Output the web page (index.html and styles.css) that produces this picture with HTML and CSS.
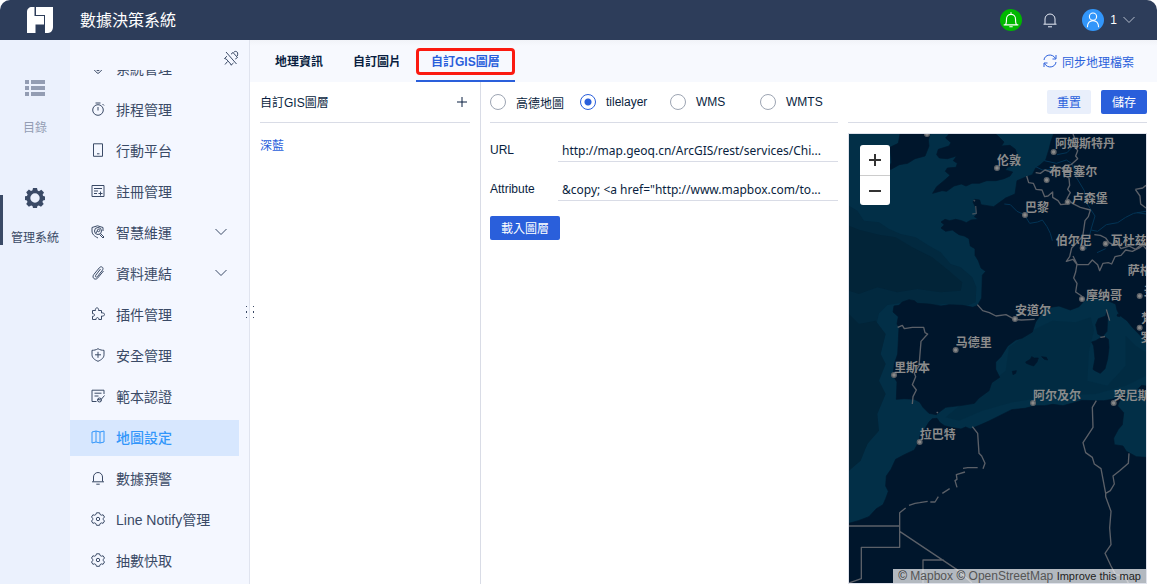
FILE: index.html
```html
<!DOCTYPE html>
<html lang="zh-Hant">
<head>
    <meta charset="UTF-8">
    <meta name="viewport" content="width=device-width, initial-scale=1.0">
    <title>數據決策系統</title>
    <link rel="stylesheet" href="styles.css">
</head>
<body>
    <header class="topbar">
        <svg class="logo" viewBox="0 0 28 28" width="28" height="28" fill="#fff">
            <path d="M1 27V6C1 3 3 1 6 1h2.500v9H18v8.500H9.500V27z"/>
            <path d="M10 1h17v20c0 3-2 6-5 6h-3V9h-9z"/>
        </svg>
        <h1 class="app-name">數據決策系統</h1>
        <button class="top-button alert-button" aria-label="通知">
            <svg class="icon" viewBox="0 0 16 16" width="18" height="18"><path d="M3.200 12c.8-1 .8-2 .8-5a4 4 0 0 1 8 0c0 3 0 4 .8 5M1.500 12.300h13M6.500 14h3M8 3V1"/></svg>
        </button>
        <button class="top-button bell-button" aria-label="訊息">
            <svg class="icon" viewBox="0 0 16 16" width="16" height="16"><path d="M3 12V7a5 5 0 0 1 10 0v5M1.500 12.200h13M6 14.800h4"/></svg>
        </button>
        <button class="user-button">
            <span class="avatar"><svg class="icon" viewBox="0 0 16 16" width="18" height="18"><circle cx="8" cy="5" r="3.200"/><path d="M3 14.500c0-8 10-8 10 0"/></svg></span>
            <span>1</span>
            <svg class="icon chevron" viewBox="0 0 12 8" width="12" height="8"><path d="M.5 1 6 6.500 11.500 1"/></svg>
        </button>
    </header>

    <div class="layout">
        <nav class="rail">
            <a href="#" class="rail-item">
                <svg viewBox="0 0 20 20" width="20" height="20" fill="#939db3"><path d="M0 2h4v4H0zM6 2h14v4H6zM0 8h4v4H0zM6 8h14v4H6zM0 14h4v4H0zM6 14h14v4H6z"/></svg>
                <span>目錄</span>
            </a>
            <a href="#" class="rail-item current">
                <svg viewBox="0 0 20 20" width="20" height="20"><path fill="#3a4a66" fill-rule="evenodd" d="M8 0h4l.6 2.600 1.400.6 2.300-1.400 2.700 2.700-1.400 2.200.6 1.400 1.800.4v3.400l-2 .6-.6 1.400 1.300 2.200-2.700 2.700-2.200-1.400-1.400.6L12 20H8l-.5-2-1.400-.6-2.200 1.400-2.700-2.700L2.500 14l-.6-1.400L0 12V8.300l2-.4.6-1.500-1.400-2.200L3.900 1.500 6 2.900l1.500-.6zM10 5.300a4.700 4.700 0 1 0 0 9.400 4.700 4.700 0 0 0 0-9.400z"/></svg>
                <span>管理系統</span>
            </a>
        </nav>

        <aside class="sidebar">
            <button class="pin-button" aria-label="釘選">
                <svg class="icon" viewBox="0 0 16 16" width="16" height="16"><path d="M3 2l10.500 12M8 4.200l2-1.700 4.500 5L12.300 9M4 6.200 1.500 8.500 3.200 9l4.500 5 .3 1.200 2.500-2.200M4.500 11.500 2 14.500M10.500 2.500C12 .5 16 1 14.300 6"/></svg>
            </button>
            <ul class="menu">
                <li><a href="#"><svg class="icon" viewBox="0 0 14 14" width="14" height="14"><path d="M1 8.500h2l1.500 2 2.500 2 2.500-2 1.500-2h2M4.500 8l2.500 2 2.500-2"/></svg>系統管理</a></li>
                <li><a href="#"><svg class="icon" viewBox="0 0 14 14" width="14" height="14"><circle cx="7" cy="8" r="5.300"/><path d="M4.500 1h5M7 5v3.500M11.500 2l1.500 1.500"/></svg>排程管理</a></li>
                <li><a href="#"><svg class="icon" viewBox="0 0 14 14" width="14" height="14"><path d="M2.500.8h9v12.500h-9zM6 10.800h2.500"/></svg>行動平台</a></li>
                <li><a href="#"><svg class="icon" viewBox="0 0 14 14" width="14" height="14"><path d="M1 1.500h12v11H1zM3 4.500h8M3 7h4M3 9.500h3M7.500 9.500h4M9.500 7.500v4"/></svg>註冊管理</a></li>
                <li><a href="#"><svg class="icon" viewBox="0 0 14 14" width="14" height="14"><path d="M7 13C3 11 1 9 1 6V2.500L6.500.8 12 2.500V6M9.500 8.500 13 12l-1 1-3.500-3.500M5 8l1.500-2.500"/><circle cx="7" cy="6" r="3.500"/><circle cx="7.500" cy="5.500" r="1.200"/></svg>智慧維運<svg class="icon arrow" viewBox="0 0 12 8" width="12" height="8"><path d="M.5 1 6 6.500 11.500 1"/></svg></a></li>
                <li><a href="#"><svg class="icon" viewBox="0 0 14 14" width="14" height="14"><path d="M9.500 3 4.700 9.300c-1 1.500.8 2.500 1.700 1.300l5.100-6.500c1.700-2.500-1.300-4.600-3.200-2.300L2.800 8.500c-2.500 3.400 1.500 6.400 4 3.400L12.500 5"/></svg>資料連結<svg class="icon arrow" viewBox="0 0 12 8" width="12" height="8"><path d="M.5 1 6 6.500 11.500 1"/></svg></a></li>
                <li><a href="#"><svg class="icon" viewBox="0 0 14 14" width="14" height="14"><path d="M1.500 3.500h3c-1-3.500 4-3.500 3 0h3V6c4-1 4 4 0 3v3.500H7.800c.3-2.600-3-2.600-2.700 0H1.500V9.300c2.800.2 2.800-2.800 0-2.600z"/></svg>插件管理</a></li>
                <li><a href="#"><svg class="icon" viewBox="0 0 14 14" width="14" height="14"><path d="M7 .7c2 1.300 4 1.600 6 1.600v4.500c0 3-2.500 5-6 6.500-3.500-1.500-6-3.500-6-6.500V2.300c2 0 4-.3 6-1.600zM7 3.800v6M4 6.800h6"/></svg>安全管理</a></li>
                <li><a href="#"><svg class="icon" viewBox="0 0 14 14" width="14" height="14"><path d="M13 5V1.200H1v11.300h4.500M3.500 4.200h7M3.500 7h4M10.500 10l3-3.500M7 10.500l3 .5"/><circle cx="8.500" cy="11" r="2"/></svg>範本認證</a></li>
                <li><a href="#" class="active"><svg class="icon" viewBox="0 0 14 14" width="14" height="14"><path d="M1 2l4-1 4 1 4-1v11l-4 1-4-1-4 1zM5 1v11M9 2v11"/></svg>地圖設定</a></li>
                <li><a href="#"><svg class="icon" viewBox="0 0 14 14" width="14" height="14"><path d="M2.500 10.500V6a4.500 4.500 0 0 1 9 0v4.500M1 10.800h12M5.300 13.200h3.400"/></svg>數據預警</a></li>
                <li><a href="#"><svg class="icon" viewBox="0 0 14 14" width="14" height="14"><path d="M5.500.8h3l.6 1.700 1.300.7 1.700-.4L13.500 5l-1.200 1.300v1.400L13.500 9l-1.400 2.300-1.700-.4-1.300.7-.6 1.700h-3l-.6-1.700-1.300-.7-1.700.4L.5 9l1.200-1.300V6.300L.5 5l1.400-2.200 1.700.4 1.300-.7z"/><circle cx="7" cy="7" r="1.700"/></svg>Line Notify管理</a></li>
                <li><a href="#"><svg class="icon" viewBox="0 0 14 14" width="14" height="14"><path d="M5.500.8h3l.6 1.700 1.300.7 1.700-.4L13.500 5l-1.200 1.300v1.400L13.500 9l-1.400 2.300-1.700-.4-1.300.7-.6 1.700h-3l-.6-1.700-1.300-.7-1.700.4L.5 9l1.200-1.300V6.300L.5 5l1.400-2.200 1.700.4 1.300-.7z"/><circle cx="7" cy="7" r="1.700"/></svg>抽數快取</a></li>
            </ul>
            <svg class="drag-handle" viewBox="0 0 10 14" width="10" height="14" fill="#3a4a66"><path d="M1 1h1v1H1zM8 1h1v1H8zM1 6h1v2H1zM8 6h1v2H8zM1 12h1v1H1zM8 12h1v1H8z"/></svg>
        </aside>

        <main class="content">
            <div class="tabs">
                <button class="tab">地理資訊</button>
                <button class="tab">自訂圖片</button>
                <button class="tab active">自訂GIS圖層</button>
                <button class="sync-button">
                    <svg class="icon" viewBox="0 0 14 14" width="14" height="14"><path d="M1 6C1.500.5 9.500-1 12.500 4.500M13 1v4H9.500M13 8c-.5 5.500-8.500 7-11.500 1.500M1 13V9h3.500"/></svg>
                    同步地理檔案
                </button>
            </div>

            <div class="panels">
                <section class="layers">
                    <div class="panel-head">
                        <h2>自訂GIS圖層</h2>
                        <button class="add-button" aria-label="新增">
                            <svg class="icon" viewBox="0 0 12 12" width="12" height="12"><path d="M6 1v10M1 6h10"/></svg>
                        </button>
                    </div>
                    <a href="#" class="layer-link">深藍</a>
                </section>

                <form class="layer-form">
                    <div class="types">
                        <label><input type="radio" name="type">高德地圖</label>
                        <label><input type="radio" name="type" checked>tilelayer</label>
                        <label><input type="radio" name="type">WMS</label>
                        <label><input type="radio" name="type">WMTS</label>
                    </div>
                    <div class="field">
                        <label for="url">URL</label>
                        <input type="text" id="url" value="http://map.geoq.cn/ArcGIS/rest/services/Chi...">
                    </div>
                    <div class="field">
                        <label for="attribute">Attribute</label>
                        <input type="text" id="attribute" value="&amp;copy; &lt;a href=&quot;http://www.mapbox.com/to...">
                    </div>
                    <button type="button" class="button primary load-button">載入圖層</button>
                </form>

                <section class="preview">
                    <div class="actions">
                        <button class="button light">重置</button>
                        <button class="button primary">儲存</button>
                    </div>
                    <div class="map">
                        <svg class="map-canvas" viewBox="0 0 891 1347" preserveAspectRatio="xMinYMin slice">
                            <rect class="sea" width="4000" height="4000"/>
                            <!-- deep water -->
                            <path class="deep" d="M0 215l25 15 20 30 45 5 30 20 35 15 45 10 40 25 35 20 30 35 30 10 35 30 12 30-2 45-30 12-60-8-50 8-70-12-55 8-25 25-12 50 10 30-15 60 6 60-12 70 10 70-25 60-40 30-30 50-25 60-15 40-20 60z"/>
                            <path class="deeper" d="M0 275l30 12 60 15 50 8 50 30 60 30 50 40 40 35-5 25-60 5-70-10-60 10-60-15-55 20-30-10zM0 540l30 30 50-10 30 40-15 60 15 30-20 50 20 40-25 60 5 50-35 40-20 50-35 30z"/>
                            <path class="deep" opacity=".6" d="M480 640l70-50 60-30 70 5 45-15 10 40-15 60-5 90 60 15 55-60 0-90 30 30 30 20v70l-60 30-90 25-130 5-120 20-90 25-70 30-40-10 60-50 60-40 60-50z"/>
                            <!-- land -->
                            <g class="land">
                                <path d="M118 105l10-20-5-45 25-12 5-28h90l-5 18 2 18-12 30-30 8-22 14-25 4-25 14z"/>
                                <path d="M300 0l-10 12 16 14-6 10-32 10-5 16 8 10 24 2 28-8-10 14 12 8-4 12-26 2-6 10 14 12-18 16-22 18-12 20 28-8 14 2 22-16 22-6 14 6 18-8 22 0 22-8 28 0 24-6 18-8 8-12-22-6 6-8 24-8 6-28-6-18-16-12-26 2 8-12-18-18-12-10L440 0z"/>
                                <path d="M614 0l-8 22-6 24-10 32-18 16-12 8-10 20-22 8-24 10-6 40-28 12-22 16-14 10-38-6-4-14-16-2-4 8 8 16 4 20-8 8 12 8-22 2-14 8-14-6-18-4-18 4-14-4-12 8 10 8-10 10 14 10 20-4 20 14 16 4 14 8 4 22 14 8 0 20 10 16 8 22 14 10-10 12-2 68L386 514 372 520 340 514 300 512 276 516 240 510 205 508 196 500 180 497 160 504 150 514 135 516 132 534 148 548 144 570 150 580 148 620 146 660 136 690 132 724 144 744 142 796 166 794 196 796 212 804 222 820 240 838 262 842 274 832 290 820 340 814 376 808 390 792 420 770 428 746 452 730 440 706 440 684 456 668 476 636 500 618 520 612 550 594 560 564 568 552 590 522 630 516 664 528 690 518 706 500 740 490 776 500 800 510 804 528 812 544 834 560 850 580 891 622V0z"/>
                                <path d="M0 1168l28-8 32-12 22-24 20-12 8-18 8-22-8-16 2-30 14-20 14-30 26-14 30-14 14-26 4-22 14-16 12-20 10-10 14-1 8 12 14 10 24 6 26 4 14-6 14 6 34-14 22-10 20-10 24-12 24-12 40-4 30-8 28 0 26-4 30 4 30-8 26-8L742 800 764 800 790 796 834 780 826 792 812 800 806 816 824 836 820 872 808 886 794 912 796 932 822 936 832 952 862 968 891 970V1347H0z"/>
                                <path d="M774 530l2 18-2 44-14 16-14-8-6-28 8-18 22-8zM764 606l14 10 2 24-4 34-8 30-14 14-16-8-6-4 6-32-4-38-6-12 12-4z"/>
                                <path d="M530 684l14-8 4-8 8 4 12 0-4 12-10 12-12-4-10-4zM578 668l14 2 4 8-10-2zM490 712l12-2-2 8-8 4zM806 540l8 2-2 6-8-2zM868 764l10-10 13 2v30l-12-8z"/>
                            </g>
                            <g class="river">
                                <path d="M466 210l18 2 20 20 22 10 16 26 24-4 14-6 14 20 10 20 6 22M624 62l30-6 22-24M586 80l36 8 30-10 18 12 12 40 24 40 6 36 26 40-12 40-14 60"/>
                                <path d="M726 288l20 4 26-20 34-6 24-16 24-12 37-6M744 356l26-12M560 98l20 10 36-2M864 236l27 4"/>
                            </g>
                            <!-- borders -->
                            <g class="border">
                                <path d="M672 0l8 20-4 16 10 14-6 16 6 8-20 18-18 2-6 12 4 18 14 8 2 22-6 12 8 10-10 18 16 14 24 12 30 8-6 20-10 12-4 28-4 26M533 126l6 20 14 2 8 18 18 2 8 20 10-2 14-12 0 16 16 10 8 12 18-2M560 116l14 2 14-10 18 6 24-14 14 6"/>
                                <path d="M736 302l18 2 16 8 10 14 12 6 10-10 14 22 24-8 20 10 16-14 15 2M702 306l-34 36-6 26-10 14 20-6 12 16 34 0 12-14 16 14 6 18 10-22 16-2 10 4 10-22 18-4 14-16 20 4 24-12 8-6 12 14 15 4M672 366l12 24-4 24-6 18 10 16-4 26 18 12 2 8M859 166l22-4 10-8M859 166l14 20 2 24 16 12"/>
                                <path d="M385 512l16 18 20 6 20 10 30-4 26 14 20 2 40-2M146 580l14-6 6 10 24-4 34 0 4 16 8 4-20 22-4 50-2 24-14 22 4 10-10 24 12 16-10 20-2 22"/>
                                <path d="M772 526l10 34M754 610l14-2M263 834l4 3"/>
                                <path d="M742 800l-12 20 2 60-30 46 8 30 20 14 6 20 20 14 14 74 0 10 16 44-4 50 4 50-18 26 18 38 14 26 28 4 14 30 50 6M770 1078l14-8 12-20-4-24 20-16 26-22 2-30"/>
                                <path d="M370 878l16 20 4 60 8 8 10 22-6 16M386 1001h-30l-14 2M348 1014l-26 8 2 14-6 4 6 20M302 1064l-22 14M268 1088l-10 16-14 0M236 1102l-24 4-14 2-18 6M170 1122l-18 14v104H37v94l-37 13M0 1176h152M152 1192l172 115 45 40M284 1278h-62v69"/>
                                <path d="M374 198l4 4M380 216l2 22-12 2" opacity=".7"/>
                            </g>
                            <g class="town">
                                <circle cx="444" cy="102" r="7"/><circle cx="614" cy="54" r="7"/><circle cx="593" cy="138" r="7"/>
                                <circle cx="656" cy="204" r="7"/><circle cx="528" cy="243" r="7"/><circle cx="701" cy="342" r="7"/>
                                <circle cx="770" cy="329" r="7"/><circle cx="699" cy="495" r="7"/><circle cx="498" cy="555" r="7"/>
                                <circle cx="320" cy="648" r="7"/><circle cx="135" cy="723" r="7"/><circle cx="552" cy="807" r="7"/>
                                <circle cx="794" cy="807" r="7"/><circle cx="212" cy="924" r="7"/><circle cx="872" cy="486" r="7"/>
                                <circle cx="872" cy="581" r="7"/><circle cx="234" cy="0" r="7"/>
                            </g>
                            <g class="place">
                                <text x="618" y="42">阿姆斯特丹</text>
                                <text x="444" y="92">伦敦</text>
                                <text x="601" y="125">布鲁塞尔</text>
                                <text x="668" y="206">卢森堡</text>
                                <text x="528" y="234">巴黎</text>
                                <text x="620" y="333">伯尔尼</text>
                                <text x="785" y="333">瓦杜兹</text>
                                <text x="836" y="422">萨格</text>
                                <text x="711" y="498">摩纳哥</text>
                                <text x="498" y="542">安道尔</text>
                                <text x="320" y="639">马德里</text>
                                <text x="135" y="713">里斯本</text>
                                <text x="552" y="797">阿尔及尔</text>
                                <text x="794" y="797">突尼斯</text>
                                <text x="212" y="915">拉巴特</text>
                                <text x="884" y="486">圣</text>
                                <text x="877" y="568">梵</text>
                                <text x="874" y="623">罗</text>
                            </g>
                        </svg>
                        <div class="zoom-control">
                            <button aria-label="放大"><svg viewBox="0 0 14 14" width="14" height="14"><path d="M7 1v12M1 7h12"/></svg></button>
                            <button aria-label="縮小"><svg viewBox="0 0 14 14" width="14" height="14"><path d="M1 7h12"/></svg></button>
                        </div>
                        <div class="attribution">© <a href="#">Mapbox</a> © <a href="#">OpenStreetMap</a> <a href="#" class="improve">Improve this map</a></div>
                    </div>
                </section>
            </div>
        </main>
    </div>
</body>
</html>
```
FILE: styles.css
```css
* {
    box-sizing: border-box;
}

body {
    margin: 0;
    height: 100vh;
    display: flex;
    flex-direction: column;
    overflow: hidden;
    background-color: #fff;
    color: #091e40;
    font-family: "Liberation Sans", "Noto Sans CJK TC", sans-serif;
    font-size: 12px;
}

button, input {
    font-family: inherit;
    font-size: inherit;
    color: inherit;
}

button {
    padding: 0;
    border: none;
    background: none;
    cursor: pointer;
}

a {
    color: inherit;
    text-decoration: none;
}

svg {
    display: block;
    flex: none;
}

.icon {
    fill: none;
    stroke: currentColor;
}

/* top bar */
.topbar {
    display: flex;
    align-items: center;
    flex: none;
    height: 40px;
    padding: 0 22px 0 26px;
    border-radius: 10px 10px 0 0;
    background-color: #2d3d5a;
    color: #fff;
}

.app-name {
    flex: 1;
    margin: 0 0 0 26px;
    padding-bottom: 2px;
    font-size: 16px;
    font-weight: normal;
}

.top-button, .avatar {
    display: flex;
    align-items: center;
    justify-content: center;
    width: 22px;
    height: 22px;
    border-radius: 50%;
}

.alert-button {
    background-color: #00b800;
}

.bell-button {
    margin: 0 21px 0 17px;
    color: #e6ebf5;
}

.avatar {
    background-color: #3296fa;
}

.user-button {
    display: flex;
    align-items: center;
    gap: 6px;
}

.chevron {
    color: #b5bdcb;
}

.layout {
    display: flex;
    flex: 1;
    min-height: 0;
}

/* left rail */
.rail {
    flex: none;
    width: 70px;
    padding-top: 38px;
    background-color: #ebf1fd;
}

.rail-item {
    position: relative;
    display: flex;
    flex-direction: column;
    align-items: center;
    gap: 20px;
    height: 110px;
    line-height: 20px;
    color: #939db3;
    white-space: nowrap;
}

.current {
    color: #3a4a66;
}

.current::before {
    content: "";
    position: absolute;
    left: 0;
    top: 7px;
    width: 3px;
    height: 50px;
    background-color: #3a4a66;
}

/* menu */
.sidebar {
    position: relative;
    display: flex;
    flex-direction: column;
    flex: none;
    width: 180px;
    border-right: 1px solid #e0e4ef;
    background-color: #f4f7ff;
    color: #3a4a66;
}

.pin-button {
    flex: none;
    align-self: flex-end;
    height: 30px;
    padding: 5px 10px 0 0;
}

.menu {
    flex: 1;
    min-height: 0;
    margin: 0;
    padding: 0 10px 0 0;
    overflow: hidden;
    list-style: none;
    font-size: 14px;
}

.menu li {
    margin-bottom: 5px;
}

.menu li:first-child {
    margin-top: -19px;
}

.menu a {
    display: flex;
    align-items: center;
    gap: 11px;
    height: 36px;
    padding: 0 12px 2px 21px;
    white-space: nowrap;
}

.menu .active {
    background-color: #d7e7fe;
    color: #3296fa;
    font-weight: 500;
}

.arrow {
    margin-left: auto;
}

.drag-handle {
    position: absolute;
    right: -6px;
    top: 265px;
}

/* content */
.content {
    display: flex;
    flex: 1;
    flex-direction: column;
    min-width: 0;
}

.tabs {
    display: flex;
    flex: none;
    height: 42px;
    padding: 0 23px 0 10px;
    background: linear-gradient(#f1f3f8, #f7f9fe 6px);
}

.tab {
    position: relative;
    padding: 0 15px;
    border-bottom: 2px solid transparent;
    font-weight: bold;
}

.tab.active {
    border-color: #2a5fdb;
    color: #2a5fdb;
}

.tab.active::after {
    content: "";
    position: absolute;
    inset: 8px 0 5px;
    border: 3px solid #fb1a10;
    border-radius: 4px;
}

.sync-button {
    display: flex;
    align-items: center;
    gap: 5px;
    margin-left: auto;
    color: #2a5fdb;
}

.panels {
    display: grid;
    grid-template-columns: 231px minmax(0, 357fr) minmax(0, 319fr);
    flex: 1;
    min-height: 0;
}

.layers {
    padding: 0 10px;
    border-right: 1px solid #d9dce6;
}

.panel-head, .types, .actions {
    display: flex;
    align-items: center;
    height: 41px;
    border-bottom: 1px solid #d9dce6;
}

.panel-head {
    justify-content: space-between;
}

.panel-head h2 {
    margin: 0;
    padding-bottom: 2px;
    font-size: 12px;
    font-weight: normal;
}

.add-button {
    padding: 2px;
}

.layer-link {
    display: block;
    margin-top: 13px;
    line-height: 20px;
    color: #2a5fdb;
}

.layer-form {
    padding-left: 9px;
}

.types label {
    display: flex;
    align-items: center;
    gap: 10px;
    flex: none;
    width: 90px;
    white-space: nowrap;
}

.types input {
    appearance: none;
    flex: none;
    width: 16px;
    height: 16px;
    margin: 0;
    border: 1px solid #9da5b3;
    border-radius: 50%;
}

.types input:checked {
    border-color: #2a5fdb;
    background: radial-gradient(#2a5fdb 3px, #fff 4px);
}

.field {
    display: flex;
    align-items: center;
    height: 24px;
    margin-top: 15px;
}

.field label {
    width: 68px;
}

.field input {
    flex: 1;
    min-width: 0;
    height: 24px;
    padding: 2px 4px 0;
    border: none;
    border-bottom: 1px solid #d9dce6;
    outline: none;
    font-family: "Noto Sans", sans-serif;
    text-overflow: ellipsis;
}

.button {
    height: 24px;
    padding: 0 11px 2px;
    border-radius: 2px;
}

.primary {
    background-color: #2a5fdb;
    color: #fff;
}

.light {
    padding: 0 10px 2px;
    background-color: #e9effb;
    color: #2a5fdb;
}

.load-button {
    margin-top: 15px;
}

.preview {
    display: flex;
    flex-direction: column;
    min-height: 0;
    padding: 0 10px;
}

.actions {
    flex: none;
    justify-content: flex-end;
    gap: 10px;
}

/* map */
.map {
    position: relative;
    flex: 1;
    min-height: 0;
    margin-top: 10px;
    border: 1px solid #dfe2eb;
    overflow: hidden;
}

.map-canvas {
    width: 100%;
    height: 100%;
}

.sea {
    fill: #022f47;
}

.deep {
    fill: #02293f;
}

.deeper {
    fill: #022438;
}

.land {
    fill: #00162c;
    stroke: #00162c;
    stroke-width: 2;
    stroke-linejoin: round;
}

.river {
    fill: none;
    stroke: #033455;
    stroke-width: 3;
}

.border {
    fill: none;
    stroke: #5b6068;
    stroke-width: 4;
    stroke-linejoin: round;
}

.town {
    fill: #8a8a8a;
    stroke: #5d6268;
    stroke-width: 4;
}

.place {
    fill: #8b8b8b;
    font-family: "Noto Sans CJK SC", sans-serif;
    font-size: 36px;
    font-weight: bold;
}

.zoom-control {
    position: absolute;
    left: 11px;
    top: 11px;
    width: 30px;
    border-radius: 3px;
    background-color: #fff;
}

.zoom-control button {
    display: flex;
    align-items: center;
    justify-content: center;
    width: 30px;
    height: 30px;
}

.zoom-control button + button {
    border-top: 1px solid #ccc;
}

.zoom-control path {
    stroke: #333;
    stroke-width: 2;
}

.attribution {
    position: absolute;
    right: 0;
    bottom: 0;
    padding: 0 5px;
    background-color: rgba(255, 255, 255, 0.7);
    line-height: 14px;
    color: #333;
    white-space: nowrap;
}

.attribution a {
    color: #555;
}

.attribution .improve {
    color: #222;
    font-size: 11px;
}
```
